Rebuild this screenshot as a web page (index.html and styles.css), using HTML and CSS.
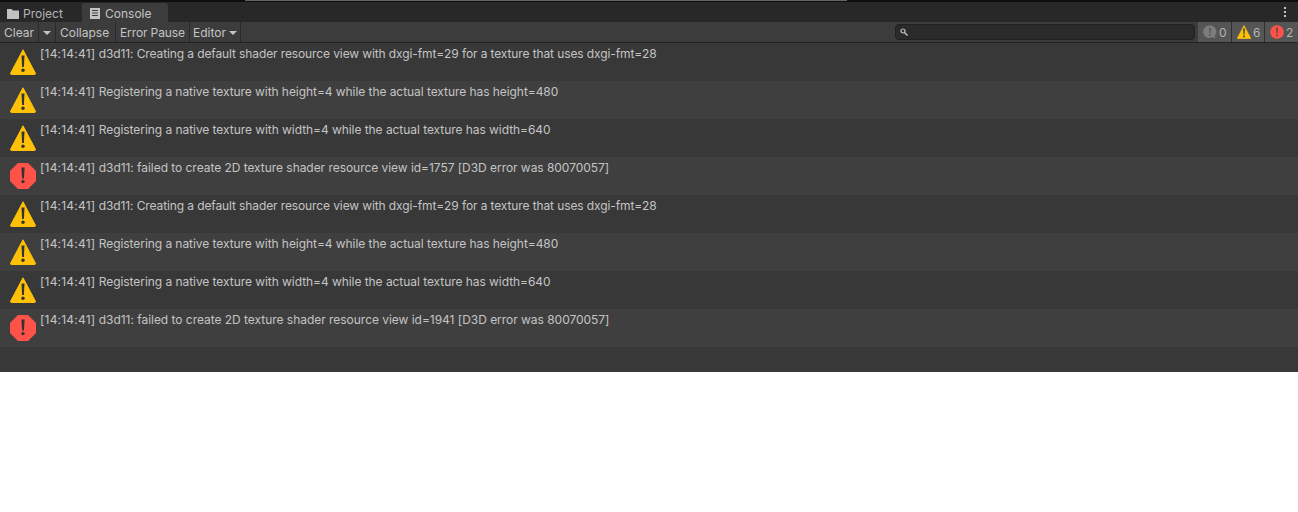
FILE: index.html
```html
<!DOCTYPE html>
<html lang="en">
<head>
<meta charset="utf-8">
<title>Console</title>
<link rel="stylesheet" href="styles.css">
</head>
<body>
<svg class="defs" width="0" height="0" aria-hidden="true">
  <symbol id="warn" viewBox="0 0 26 26">
    <path d="M13 .8 L25.3 24 Q25.8 25.5 24.3 25.5 L1.7 25.5 Q.2 25.5 .7 24 Z" fill="#ffc107" stroke="#ffc107" stroke-linejoin="round"/>
    <path d="M11.5 6.5h3l-.6 11.5h-1.8z" fill="#333"/>
    <circle cx="13" cy="21.2" r="1.7" fill="#333"/>
  </symbol>
  <symbol id="err" viewBox="0 0 26 26">
    <path d="M8 0H18L26 8V18L18 26H8L0 18V8Z" fill="#ff534a"/>
    <path d="M11.4 4.5h3.2l-.7 11h-1.8z" fill="#333"/>
    <circle cx="13" cy="18.6" r="1.7" fill="#333"/>
  </symbol>
</svg>
<main class="panel">
  <div class="topline"><span class="topline-lit"></span></div>
  <nav class="tabs">
    <div class="tab">
      <svg class="tab-icon" viewBox="0 0 12 11"><path d="M0 1h4.5l1.5 1.5h6V11H0z" fill="#c2c2c2"/></svg>
      <span>Project</span>
    </div>
    <div class="tab tab-active">
      <svg class="tab-icon" viewBox="0 0 12 11"><path d="M1 0h10v11H1z" fill="#c4c4c4"/><path d="M3 2.5h6M3 5h6M3 7.5h6" stroke="#3c3c3c" stroke-width="1"/></svg>
      <span>Console</span>
    </div>
    <div class="kebab"><i></i><i></i><i></i></div>
  </nav>
  <div class="toolbar">
    <button class="tool tool-clear">Clear</button>
    <button class="tool tool-arrow"><i class="caret"></i></button>
    <button class="tool tool-collapse">Collapse</button>
    <button class="tool tool-pause">Error Pause</button>
    <button class="tool tool-editor">Editor<i class="caret"></i></button>
    <div class="search">
      <svg class="search-icon" viewBox="0 0 8 8"><circle cx="3" cy="3" r="2" fill="none" stroke="#c4c4c4" stroke-width="1.2"/><path d="M4.5 4.5L7.5 7.5" stroke="#c4c4c4" stroke-width="1.4"/></svg>
    </div>
    <div class="count count-info">
      <svg class="count-icon" viewBox="0 0 14 14"><path d="M7 .5a6.3 6.3 0 0 1 4.6 10.6l.9 2.4-3-1.2A6.3 6.3 0 1 1 7 .5z" fill="#7d7d7d"/><path d="M6.2 3h1.6l-.3 5.2h-1z" fill="#555"/><circle cx="7" cy="10" r=".9" fill="#555"/></svg>
      <span>0</span>
    </div>
    <div class="count count-warn">
      <svg class="count-icon" viewBox="0 0 26 26"><use href="#warn"/></svg>
      <span>6</span>
    </div>
    <div class="count count-err">
      <svg class="count-icon" viewBox="0 0 14 14"><circle cx="7" cy="7" r="6.8" fill="#ff534a"/><path d="M6.2 2.5h1.6l-.3 6h-1z" fill="#444"/><circle cx="7" cy="10.3" r=".9" fill="#444"/></svg>
      <span>2</span>
    </div>
  </div>
  <ul class="log">
    <li class="row"><svg class="row-icon"><use href="#warn"/></svg><span class="msg"><span class="stamp">[14:14:41]</span> <span class="text-fmt">d3d11: Creating a default shader resource view with dxgi-fmt=29 for a texture that uses dxgi-fmt=28</span></span></li>
    <li class="row"><svg class="row-icon"><use href="#warn"/></svg><span class="msg"><span class="stamp">[14:14:41]</span> <span class="text-height">Registering a native texture with height=4 while the actual texture has height=480</span></span></li>
    <li class="row"><svg class="row-icon"><use href="#warn"/></svg><span class="msg"><span class="stamp">[14:14:41]</span> <span class="text-width">Registering a native texture with width=4 while the actual texture has width=640</span></span></li>
    <li class="row"><svg class="row-icon"><use href="#err"/></svg><span class="msg"><span class="stamp">[14:14:41]</span> <span class="text-fail">d3d11: failed to create 2D texture shader resource view id=1757 [D3D error was 80070057]</span></span></li>
    <li class="row"><svg class="row-icon"><use href="#warn"/></svg><span class="msg"><span class="stamp">[14:14:41]</span> <span class="text-fmt">d3d11: Creating a default shader resource view with dxgi-fmt=29 for a texture that uses dxgi-fmt=28</span></span></li>
    <li class="row"><svg class="row-icon"><use href="#warn"/></svg><span class="msg"><span class="stamp">[14:14:41]</span> <span class="text-height">Registering a native texture with height=4 while the actual texture has height=480</span></span></li>
    <li class="row"><svg class="row-icon"><use href="#warn"/></svg><span class="msg"><span class="stamp">[14:14:41]</span> <span class="text-width">Registering a native texture with width=4 while the actual texture has width=640</span></span></li>
    <li class="row"><svg class="row-icon"><use href="#err"/></svg><span class="msg"><span class="stamp">[14:14:41]</span> <span class="text-fail-alt">d3d11: failed to create 2D texture shader resource view id=1941 [D3D error was 80070057]</span></span></li>
  </ul>
</main>
</body>
</html>
```
FILE: styles.css
```css
* { box-sizing: border-box; }
html, body { margin: 0; padding: 0; background: #fff; }
body { font-family: Inter, "Liberation Sans", sans-serif; font-size: 12px; color: #c4c4c4; }
.defs { position: absolute; }
.panel { height: 372px; background: #383838; display: flex; flex-direction: column; overflow: hidden; }
.topline { height: 2px; background: #0e0e0e; padding-left: 245px; flex: none; }
.topline-lit { display: block; width: 602px; height: 1px; background: #6a625c; }
.tabs { height: 20px; background: #282828; display: flex; flex: none; align-items: stretch; padding-top: 1px; }
.tab { display: flex; align-items: center; gap: 4px; width: 82px; padding: 2px 0 0 7px; color: #b4b4b4; }
.tab-active { width: 86px; background: #3c3c3c; border-radius: 3px 3px 0 0; color: #c4c4c4; }
.tab-icon { width: 12px; height: 11px; flex: none; }
.kebab { margin-left: auto; width: 26px; display: flex; flex-direction: column; align-items: center; justify-content: center; gap: 2px; margin-top: -2px; }
.kebab i { width: 2px; height: 2px; background: #c4c4c4; }
.toolbar { height: 21px; flex: none; background: #3c3c3c; border-bottom: 1px solid #232323; display: flex; align-items: stretch; }
.tool { font: inherit; color: #c4c4c4; background: #3c3c3c; border: 0; border-right: 1px solid #2a2a2a; padding: 1px 0 0; display: flex; align-items: center; }
.tool-clear { width: 39px; padding-left: 4px; }
.tool-arrow { width: 17px; justify-content: center; }
.tool-collapse { width: 60px; padding-left: 4px; }
.tool-pause { width: 74px; padding-left: 4px; letter-spacing: -.12px; }
.tool-editor { width: 51px; padding-left: 3px; gap: 3px; }
.caret { width: 0; height: 0; border-left: 4px solid transparent; border-right: 4px solid transparent; border-top: 4px solid #c4c4c4; }
.search { margin: 2px 3px 2px auto; width: 300px; background: #2a2a2a; border: 1px solid #212121; border-radius: 4px; display: flex; align-items: center; padding-left: 4px; }
.search-icon { width: 8px; height: 8px; }
.count { background: #555; border-right: 1px solid #2f2f2f; display: flex; align-items: center; gap: 2px; padding-left: 5px; color: #b4b4b4; font-size: 12px; }
.count-info { width: 34px; }
.count-warn { width: 33px; }
.count-err { width: 33px; border-right: 0; }
.count-icon { width: 14px; height: 14px; flex: none; }
.log { list-style: none; margin: 0; padding: 0; flex: 1; }
.row { height: 38px; display: flex; align-items: flex-start; background: #383838; padding-left: 10px; }
.row:nth-child(even) { background: #3f3f3f; }
.msg { margin-left: 4px; margin-top: 3px; line-height: 15px; white-space: nowrap; }
.stamp { letter-spacing: .2px; }
.text-fmt { letter-spacing: -.11px; }
.text-height { letter-spacing: -.06px; }
.text-width { letter-spacing: -.055px; }
.text-fail { letter-spacing: -.045px; }
.text-fail-alt { letter-spacing: -.03px; }
.row-icon { width: 26px; height: 26px; margin-top: 6px; flex: none; }
```
